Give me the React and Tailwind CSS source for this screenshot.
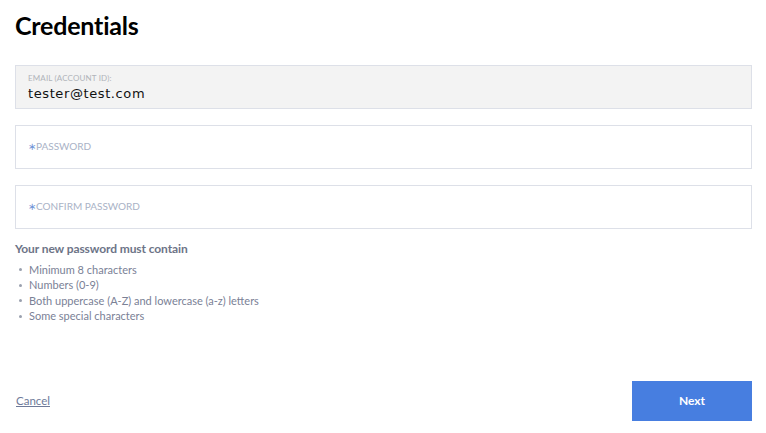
import React from "react";

export default function App() {
  const items = [
    "Minimum 8 characters",
    "Numbers (0-9)",
    "Both uppercase (A-Z) and lowercase (a-z) letters",
    "Some special characters",
  ];
  return (
    <div className="w-[766px] h-[433px] bg-white flex flex-col px-[15px] font-['Lato',sans-serif] text-[#1a1a1a] overflow-hidden">
      <h1 className="mt-[10px] text-[25px] leading-[31px] font-bold text-black tracking-[-0.2px]">Credentials</h1>
      <div className="mt-[24px] w-[737px] h-[44px] border border-[#dde0e8] bg-[#f3f3f3] flex flex-col justify-center pl-[12px]">
        <div className="text-[8px] leading-[10px] text-[#b0b3ba] uppercase tracking-[0.15px]">Email (Account ID):</div>
        <div className="mt-[3px] text-[13px] leading-[16px] text-[#111] font-['DejaVu_Sans',sans-serif] tracking-[0.6px]">tester@test.com</div>
      </div>
      <div className="mt-[16px] w-[737px] h-[44px] border border-[#dde0e8] bg-white flex items-center pl-[12px] pb-[2px]">
        <span className="text-[10px] text-[#a9b2c6] uppercase"><span className="text-[#6f93d6] mr-[0px]">∗</span>Password</span>
      </div>
      <div className="mt-[16px] w-[737px] h-[44px] border border-[#dde0e8] bg-white flex items-center pl-[12px] pb-[2px]">
        <span className="text-[10px] text-[#a9b2c6] uppercase"><span className="text-[#6f93d6] mr-[0px]">∗</span>Confirm Password</span>
      </div>
      <div className="mt-[12px] text-[12px] leading-[16px] font-bold text-[#6d7487] tracking-[-0.1px]">Your new password must contain</div>
      <ul className="mt-[5px] flex flex-col">
        {items.map((t) => (
          <li key={t} className="flex items-center h-[15.5px] text-[11px] text-[#7a8196]">
            <span className="w-[3px] h-[3px] rounded-full bg-[#9aa0ae] ml-[4px] mr-[7px]" />
            {t}
          </li>
        ))}
      </ul>
      <div className="mt-auto mb-[12px] flex items-center justify-between">
        <a href="#" className="ml-[1px] text-[11.5px] text-[#6e7a99] underline">Cancel</a>
        <button className="mr-[-1px] w-[120px] h-[40px] bg-[#477ee0] text-white text-[12px] font-bold">Next</button>
      </div>
    </div>
  );
}
